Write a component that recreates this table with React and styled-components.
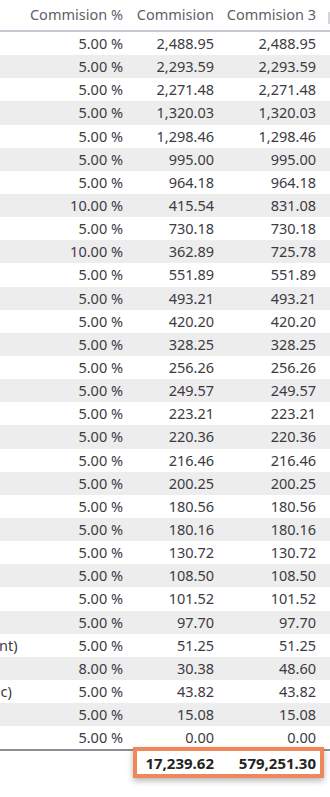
import React from 'react';
import styled, { createGlobalStyle } from 'styled-components';

const GlobalStyle = createGlobalStyle`
  html, body {
    margin: 0;
    padding: 0;
    background: #ffffff;
  }
  body {
    font-family: "Noto Sans", "Open Sans", "Liberation Sans", sans-serif;
    width: 330px;
    height: 797px;
    overflow: hidden;
  }
`;

const Viewport = styled.div`
  width: 330px;
  height: 797px;
  overflow: hidden;
  position: relative;
`;

// the table is scrolled sideways: the name column sits mostly off-screen
const Table = styled.div`
  display: grid;
  grid-template-columns: 170px 102px 91px 102px 9px;
  margin-left: -144px;
  width: 474px;
`;

const HeaderRow = styled.div`
  display: contents;
`;

const HeaderCell = styled.div`
  height: 32px;
  box-sizing: border-box;
  padding: 4px 5px 0 0;
  text-align: right;
  font-size: 14.5px;
  color: #5f5e66;
  white-space: nowrap;
  border-bottom: 2px solid #c9c8d2;
`;

const Row = styled.div`
  display: contents;
  & > div {
    background: ${(p) => (p.$striped ? '#ededed' : '#ffffff')};
  }
`;

const Cell = styled.div`
  height: 23.15px;
  box-sizing: border-box;
  padding: 0 5px 0 ${(p) => (p.$name ? '10px' : '0')};
  text-align: ${(p) => (p.$name ? 'left' : 'right')};
  font-size: 14.5px;
  line-height: 23px;
  color: #3c3b42;
  white-space: nowrap;
  overflow: hidden;
`;

const TotalRow = styled.div`
  grid-column: 1 / -1;
  border-top: 2px solid #8f8e94;
  display: flex;
  padding-left: 277px;
`;

const Highlight = styled.div`
  margin-top: -4px;
  width: 191px;
  height: 31px;
  box-sizing: border-box;
  border: 4px solid #f0875c;
  box-shadow: 0 3px 6px rgba(0, 0, 0, 0.28);
  display: grid;
  grid-template-columns: 82px 101px;
  align-items: center;
  background: #ffffff;
`;

const TotalValue = styled.div`
  text-align: right;
  font-weight: 700;
  font-size: 15px;
  color: #252423;
  padding-right: ${(p) => p.$pad}px;
  white-space: nowrap;
`;

const EdgeMark = styled.div`
  position: absolute;
  right: 0;
  top: 12px;
  width: 2px;
  height: 12px;
  background: #d6d5da;
`;

const rows = [
  ['Outdoor', '5.00 %', '2,488.95', '2,488.95'],
  ['Garden', '5.00 %', '2,293.59', '2,293.59'],
  ['Kitchen', '5.00 %', '2,271.48', '2,271.48'],
  ['Lighting', '5.00 %', '1,320.03', '1,320.03'],
  ['Storage', '5.00 %', '1,298.46', '1,298.46'],
  ['Tools', '5.00 %', '995.00', '995.00'],
  ['Bath', '5.00 %', '964.18', '964.18'],
  ['Office', '10.00 %', '415.54', '831.08'],
  ['Decor', '5.00 %', '730.18', '730.18'],
  ['Pets', '10.00 %', '362.89', '725.78'],
  ['Toys', '5.00 %', '551.89', '551.89'],
  ['Books', '5.00 %', '493.21', '493.21'],
  ['Music', '5.00 %', '420.20', '420.20'],
  ['Games', '5.00 %', '328.25', '328.25'],
  ['Sports', '5.00 %', '256.26', '256.26'],
  ['Shoes', '5.00 %', '249.57', '249.57'],
  ['Bags', '5.00 %', '223.21', '223.21'],
  ['Hats', '5.00 %', '220.36', '220.36'],
  ['Belts', '5.00 %', '216.46', '216.46'],
  ['Socks', '5.00 %', '200.25', '200.25'],
  ['Gloves', '5.00 %', '180.56', '180.56'],
  ['Scarves', '5.00 %', '180.16', '180.16'],
  ['Paint', '5.00 %', '130.72', '130.72'],
  ['Paper', '5.00 %', '108.50', '108.50'],
  ['Pens', '5.00 %', '101.52', '101.52'],
  ['Ink', '5.00 %', '97.70', '97.70'],
  ['Accessories (Discount)', '5.00 %', '51.25', '51.25'],
  ['Gifts', '8.00 %', '30.38', '48.60'],
  ['Gift Cards (Electronic)', '5.00 %', '43.82', '43.82'],
  ['Misc', '5.00 %', '15.08', '15.08'],
  ['Other', '5.00 %', '0.00', '0.00'],
];

const App = () => {
  return (
    <>
      <GlobalStyle />
      <Viewport>
        <Table>
          <HeaderRow>
            <HeaderCell />
            <HeaderCell>Commision %</HeaderCell>
            <HeaderCell>Commision</HeaderCell>
            <HeaderCell>Commision 3</HeaderCell>
            <HeaderCell />
          </HeaderRow>
          {rows.map((r, i) => (
            <Row key={i} $striped={i % 2 === 1}>
              <Cell $name>{r[0]}</Cell>
              <Cell>{r[1]}</Cell>
              <Cell>{r[2]}</Cell>
              <Cell>{r[3]}</Cell>
              <Cell />
            </Row>
          ))}
          <TotalRow>
            <Highlight>
              <TotalValue $pad={5}>17,239.62</TotalValue>
              <TotalValue $pad={4}>579,251.30</TotalValue>
            </Highlight>
          </TotalRow>
        </Table>
        <EdgeMark />
      </Viewport>
    </>
  );
};

export default App;
